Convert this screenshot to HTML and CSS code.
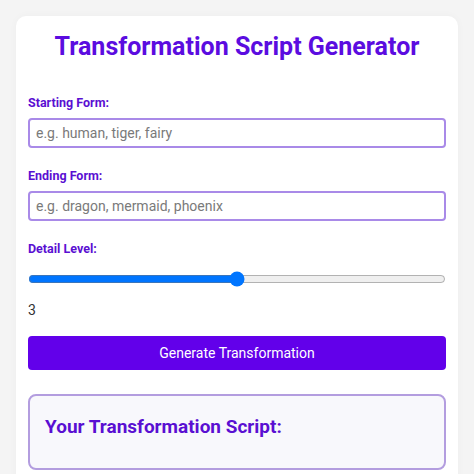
FILE: index.html
```html
<!DOCTYPE html>
<html>
<head>
<meta charset="utf-8">
<link rel="stylesheet" href="styles.css">
</head>
<body>
<div class="card">
  <h1 class="title">Transformation Script Generator</h1>
  <div class="field">
    <label class="label" for="start">Starting Form:</label>
    <input class="text-input" id="start" type="text" placeholder="e.g. human, tiger, fairy">
  </div>
  <div class="field">
    <label class="label" for="end">Ending Form:</label>
    <input class="text-input" id="end" type="text" placeholder="e.g. dragon, mermaid, phoenix">
  </div>
  <div class="field">
    <label class="label" for="detail">Detail Level:</label>
    <input class="range" id="detail" type="range" min="1" max="5" value="3">
    <div class="value">3</div>
  </div>
  <button class="generate">Generate Transformation</button>
  <div class="output">
    <h3 class="output-title">Your Transformation Script:</h3>
  </div>
</div>
</body>
</html>
```
FILE: styles.css
```css
html, body {
  margin: 0;
  padding: 0;
}
body {
  background: #f4f4f4;
  font-family: Roboto, "Liberation Sans", sans-serif;
  padding: 16px 16px 0 16px;
  height: 474px;
  box-sizing: border-box;
  overflow: hidden;
}
.card {
  background: #ffffff;
  border-radius: 10px;
  padding: 16px 12px 20px 12px;
  box-shadow: 0 0 8px rgba(0,0,0,0.03);
}
.title {
  margin: 0 0 33px 0;
  text-align: center;
  font-size: 25px;
  font-weight: 700;
  color: #5b0ce0;
  line-height: 30px;
}
.field {
  display: flex;
  flex-direction: column;
}
.label {
  font-size: 12.5px;
  font-weight: 700;
  color: #5a0fd2;
  line-height: 16px;
  margin-bottom: 7px;
}
.text-input {
  box-sizing: border-box;
  height: 30px;
  border: 2px solid #a98ae8;
  border-radius: 4px;
  padding: 0 6px;
  font-family: Roboto, "Liberation Sans", sans-serif;
  font-size: 14px;
  color: #333;
  margin: 0 0 20px 0;
  outline: none;
}
.text-input::placeholder {
  color: #7a7a7a;
}
.range {
  width: 100%;
  margin: 7px 0 0 0;
}
.value {
  font-size: 14px;
  color: #333;
  line-height: 16px;
  margin-top: 15px;
}
.generate {
  display: block;
  width: 100%;
  height: 34px;
  margin-top: 18px;
  border: none;
  border-radius: 4px;
  background: #6200ea;
  color: #ffffff;
  font-family: Roboto, "Liberation Sans", sans-serif;
  font-size: 14px;
}
.output {
  margin-top: 24px;
  box-sizing: border-box;
  height: 76px;
  border: 2px solid #b39ddf;
  border-radius: 8px;
  background: #f8f8fc;
  padding: 15px;
}
.output-title {
  margin: 4px 0 0 0;
  font-size: 19px;
  font-weight: 700;
  color: #5a0fd2;
  line-height: 23px;
}
```
